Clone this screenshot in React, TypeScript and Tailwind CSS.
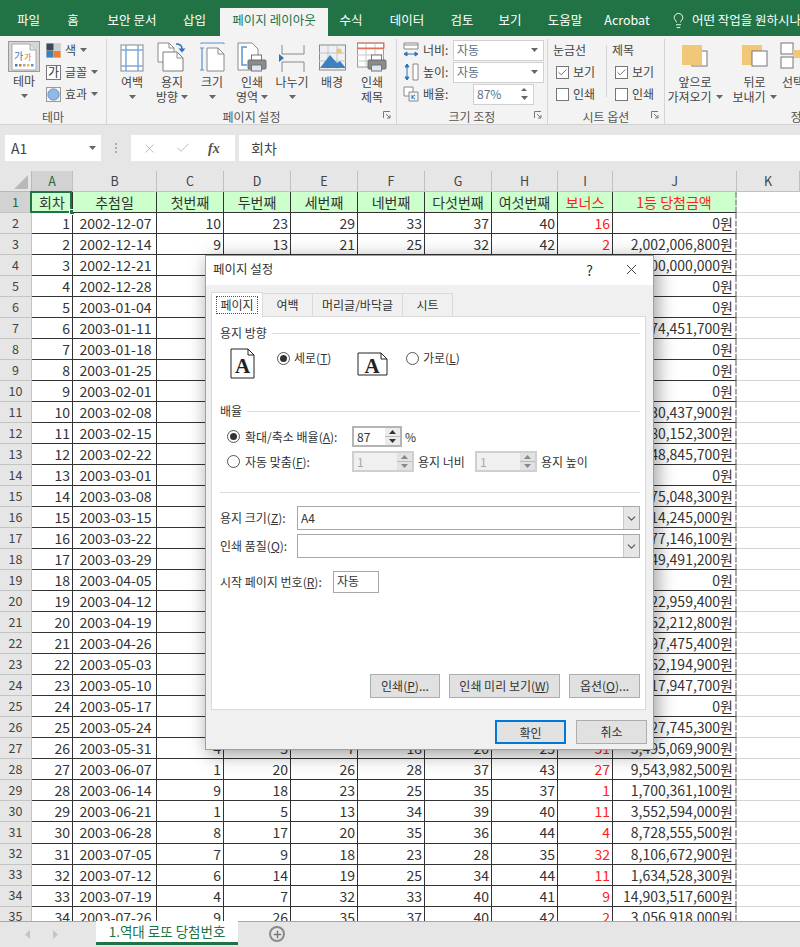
import { Check, ChevronDown, Lightbulb, Plus, X } from "lucide-react"
import type { ReactNode } from "react"

const colHeads = ["A", "B", "C", "D", "E", "F", "G", "H", "I", "J", "K"]
const titles = ["회차", "추첨일", "첫번째", "두번째", "세번째", "네번째", "다섯번째", "여섯번째", "보너스", "1등 당첨금액"]

// only the numbers that are not behind the dialog
const balls: Record<number, number[]> = {
  1: [10, 23, 29, 33, 37, 40, 16],
  2: [9, 13, 21, 25, 32, 42, 2],
  26: [4, 5, 7, 18, 20, 25, 31],
  27: [1, 20, 26, 28, 37, 43, 27],
  28: [9, 18, 23, 25, 35, 37, 1],
  29: [1, 5, 13, 34, 39, 40, 11],
  30: [8, 17, 20, 35, 36, 44, 4],
  31: [7, 9, 18, 23, 28, 35, 32],
  32: [6, 14, 19, 25, 34, 44, 11],
  33: [4, 7, 32, 33, 40, 41, 9],
  34: [9, 26, 35, 37, 40, 42, 2],
}

const prizes = [
  "0", "2,002,006,800", "2,000,000,000", "0", "0", "74,451,700", "0", "0", "0", "30,437,900", "80,152,300",
  "48,845,700", "0", "75,048,300", "14,245,000", "77,146,100", "49,491,200", "0", "22,959,400", "52,212,800",
  "97,475,400", "52,194,900", "17,947,700", "0", "27,745,300", "3,495,069,900", "9,543,982,500", "1,700,361,100",
  "3,552,594,000", "8,728,555,500", "8,106,672,900", "1,634,528,300", "14,903,517,600", "3,056,918,000",
]

function drawDate(round: number) {
  const d = new Date(Date.UTC(2002, 11, 7 + (round - 1) * 7))
  return d.toISOString().slice(0, 10)
}

function Caret() {
  return (
    <svg width="7" height="4" viewBox="0 0 7 4" className="inline-block shrink-0">
      <path d="M0 0h7L3.5 4z" fill="#666" />
    </svg>
  )
}

function Printer({ x, y }: { x: number; y: number }) {
  return (
    <g transform={`translate(${x} ${y})`}>
      <rect x="4" y="0.5" width="10" height="6" fill="#fff" stroke="#777" />
      <rect x="0.5" y="5.5" width="18" height="9" rx="1" fill="#8b8b8b" stroke="#6f6f6f" />
      <rect x="4" y="10.5" width="10" height="6" fill="#dfe7f2" stroke="#777" />
    </g>
  )
}

function MarginsIcon() {
  return (
    <svg width="24" height="28" viewBox="0 0 24 28">
      <rect x="1" y="1" width="22" height="26" fill="#fff" stroke="#8a8a8a" />
      <path d="M6 1v26M18 1v26M1 6h22M1 22h22" stroke="#7da9dc" strokeWidth="1.5" />
    </svg>
  )
}

function OrientationIcon() {
  return (
    <svg width="30" height="30" viewBox="0 0 30 30">
      <path d="M1 1h11l5 5v14H1z" fill="#fff" stroke="#8a8a8a" />
      <path d="M6 10h14l6 6v13H6z" fill="#fff" stroke="#7a7a7a" />
      <path d="M20 10v6h6M12 1v5h5" fill="none" stroke="#8a8a8a" />
      <path d="M19 2c4 0 6 2 6 5" fill="none" stroke="#2f74b8" strokeWidth="1.6" />
      <path d="M21.5 6.5h7L25 10.5z" fill="#2f74b8" />
    </svg>
  )
}

function SizeIcon() {
  return (
    <svg width="25" height="30" viewBox="0 0 25 30">
      <path d="M7 6h11l6 6v17H7z" fill="#fff" stroke="#8a8a8a" />
      <path d="M18 6v6h6" fill="none" stroke="#8a8a8a" />
      <path d="M1 1h23M1 1v1M24 1v1M2 6v22M0 6h4M0 28h4" stroke="#5b93d2" strokeWidth="1.2" fill="none" />
    </svg>
  )
}

function PrintAreaIcon() {
  return (
    <svg width="30" height="30" viewBox="0 0 30 30">
      <path d="M1 1h14l6 6v21H1z" fill="#fff" stroke="#8a8a8a" />
      <path d="M10 5H5v18h5" fill="none" stroke="#5b93d2" strokeWidth="1.5" />
      <Printer x={10.5} y={12.5} />
    </svg>
  )
}

function BreaksIcon() {
  return (
    <svg width="26" height="28" viewBox="0 0 26 28">
      <path d="M3 1v9h22V1M3 28V18h22v10" fill="none" stroke="#8a8a8a" />
      <path d="M0 10l5 4-5 4z" fill="#2f74b8" />
    </svg>
  )
}

function BackgroundIcon() {
  return (
    <svg width="27" height="28" viewBox="0 0 27 28">
      <rect x="0.5" y="1" width="26" height="25" fill="#eef1f3" stroke="#8a8a8a" />
      <path d="M9 1v25M18 1v25M0 9h27M0 17h27" stroke="#c3c3c3" />
      <circle cx="20" cy="7" r="2.6" fill="#efc377" />
      <path d="M1 24l10-13 7 8 3-2 5 6v1H1z" fill="#3f7fbe" />
    </svg>
  )
}

function PrintTitlesIcon() {
  return (
    <svg width="30" height="30" viewBox="0 0 30 30">
      <rect x="0.5" y="1" width="26" height="24" fill="#fff" stroke="#9a9a9a" />
      <path d="M0 7h27M0 13h27M0 19h27M9 1v24M18 1v24" stroke="#c8c8c8" />
      <rect x="0" y="1" width="27" height="5" fill="none" stroke="#e0705a" />
      <path d="M0 6.5h27" stroke="#e0705a" />
      <Printer x={10.5} y={12.5} />
    </svg>
  )
}

function ThemeIcon() {
  return (
    <svg width="26" height="28" viewBox="0 0 26 28">
      <path d="M1 1h18l6 6v20H1z" fill="#fff" stroke="#aaa" />
      <path d="M19 1v6h6" fill="#e5e5e5" stroke="#aaa" />
      <text x="3" y="17" fontSize="10" fill="#2f74b8">가</text>
      <text x="13" y="17" fontSize="8" fill="#d8772a">가</text>
      <g>
        <rect x="4" y="21" width="2.5" height="2.5" fill="#3f7fbe" />
        <rect x="8" y="21" width="2.5" height="2.5" fill="#d8772a" />
        <rect x="12" y="21" width="2.5" height="2.5" fill="#a5a5a5" />
        <rect x="16" y="21" width="2.5" height="2.5" fill="#efc04a" />
        <rect x="20" y="21" width="2.5" height="2.5" fill="#5b93d2" />
      </g>
    </svg>
  )
}

function ColorsIcon() {
  return (
    <svg width="15" height="15" viewBox="0 0 15 15">
      <rect width="15" height="15" fill="#d9d9d9" />
      <rect x="0.5" y="0.5" width="7" height="7" fill="#3b4a5a" />
      <rect x="8" y="0.5" width="6.5" height="7" fill="#cfcfcf" />
      <rect x="0.5" y="8" width="7" height="6.5" fill="#3f7fbe" />
      <rect x="8" y="8" width="6.5" height="6.5" fill="#ed7d31" />
    </svg>
  )
}

function FontsIcon() {
  return (
    <span className="flex h-[15px] w-[15px] items-center justify-center border border-[#777] bg-white text-[12px] leading-none text-[#333]">
      가
    </span>
  )
}

function EffectsIcon() {
  return (
    <svg width="15" height="15" viewBox="0 0 15 15">
      <rect x="0.5" y="0.5" width="14" height="14" fill="#f5f5f5" stroke="#999" />
      <circle cx="7.5" cy="7.5" r="5.6" fill="#92b8e4" stroke="#5b93d2" />
    </svg>
  )
}

function Launcher() {
  return (
    <svg width="8" height="8" viewBox="0 0 8 8" className="absolute bottom-[5px] right-[5px]">
      <path d="M0.5 7V0.5H7M3 3l4 4M7 4v3H4" fill="none" stroke="#777" />
    </svg>
  )
}

function Group({ label, width, children, launcher }: { label: string; width: string; children: ReactNode; launcher?: boolean }) {
  return (
    <div className={`relative flex h-[85px] shrink-0 flex-col border-r border-[#d5d5d5] ${width}`}>
      <div className="flex h-[72px] flex-1">{children}</div>
      <div className="pb-[1px] text-center text-[12px] leading-[13px] text-[#555]">{label}</div>
      {launcher && <Launcher />}
    </div>
  )
}

function BigButton({ icon, lines, caret }: { icon: ReactNode; lines: string[]; caret?: boolean }) {
  return (
    <div className="flex w-[40px] shrink-0 flex-col items-center text-[12px] leading-[15px] text-[#444]">
      <div className="flex h-[32px] items-end justify-center">{icon}</div>
      <div className="mt-[2px] whitespace-nowrap">{lines[0]}</div>
      {lines[1] ? (
        <div className="flex items-center gap-[3px] whitespace-nowrap">
          {lines[1]}
          {caret && <Caret />}
        </div>
      ) : (
        caret && (
          <div className="flex h-[15px] items-center">
            <Caret />
          </div>
        )
      )}
    </div>
  )
}

function SmallTheme({ icon, label }: { icon: ReactNode; label: string }) {
  return (
    <div className="flex h-[22px] items-center gap-[4px] text-[12px] text-[#444]">
      {icon}
      {label}
      <Caret />
    </div>
  )
}

function CheckBox({ checked, label }: { checked?: boolean; label: string }) {
  return (
    <div className="flex h-[22px] items-center gap-[4px] text-[12px] text-[#444]">
      <span className="flex h-[13px] w-[13px] items-center justify-center border border-[#777] bg-white">
        {checked && <Check size={11} strokeWidth={1.6} color="#444" />}
      </span>
      {label}
    </div>
  )
}

function ScaleCombo({ label, icon }: { label: string; icon: ReactNode }) {
  return (
    <div className="flex h-[22px] items-center text-[12px] text-[#444]">
      <span className="w-[16px]">{icon}</span>
      <span className="ml-[4px] w-[30px]">{label}</span>
      <span className="flex h-[21px] w-[91px] items-center justify-between border border-[#d0d0d0] bg-white pl-[3px] pr-[5px] text-[#5a6f8a]">
        자동
        <Caret />
      </span>
    </div>
  )
}

function Ribbon() {
  return (
    <div className="flex h-[89px] overflow-hidden border-b border-[#d2d2d2] bg-[#f3f3f3] pt-[3px]">
      <Group label="테마" width="w-[107px]">
        <div className="ml-[8px] flex w-[32px] flex-col items-center text-[12px] leading-[15px] text-[#444]">
          <div className="mt-[2px] flex h-[31px] w-[32px] items-center justify-center border border-[#9a9a9a] bg-[#d6d6d6]">
            <ThemeIcon />
          </div>
          <div className="mt-[1px]">테마</div>
          <div className="flex h-[15px] items-center">
            <Caret />
          </div>
        </div>
        <div className="ml-[6px] flex flex-col">
          <SmallTheme icon={<ColorsIcon />} label="색" />
          <SmallTheme icon={<FontsIcon />} label="글꼴" />
          <SmallTheme icon={<EffectsIcon />} label="효과" />
        </div>
      </Group>
      <Group label="페이지 설정" width="w-[290px]" launcher>
        <div className="ml-[5px] mt-[1px] flex">
          <BigButton icon={<MarginsIcon />} lines={["여백"]} caret />
          <BigButton icon={<OrientationIcon />} lines={["용지", "방향"]} caret />
          <BigButton icon={<SizeIcon />} lines={["크기"]} caret />
          <BigButton icon={<PrintAreaIcon />} lines={["인쇄", "영역"]} caret />
          <BigButton icon={<BreaksIcon />} lines={["나누기"]} caret />
          <BigButton icon={<BackgroundIcon />} lines={["배경"]} />
          <BigButton icon={<PrintTitlesIcon />} lines={["인쇄", "제목"]} />
        </div>
      </Group>
      <Group label="크기 조정" width="w-[151px]" launcher>
        <div className="ml-[6px] flex flex-col">
          <ScaleCombo
            label="너비:"
            icon={
              <svg width="16" height="16" viewBox="0 0 16 16">
                <path d="M1 1h14v6H1zM1 3h14" fill="#fff" stroke="#888" />
                <path d="M1 12h14M1 12l3-2v4zM15 12l-3-2v4z" stroke="#2f74b8" fill="#2f74b8" />
              </svg>
            }
          />
          <ScaleCombo
            label="높이:"
            icon={
              <svg width="16" height="18" viewBox="0 0 16 18">
                <path d="M10 1h5v16h-5z" fill="#fff" stroke="#888" />
                <path d="M4 1v16M4 1L2 4h4zM4 17l-2-3h4z" stroke="#2f74b8" fill="#2f74b8" />
              </svg>
            }
          />
          <div className="flex h-[22px] items-center text-[12px] text-[#444]">
            <svg width="16" height="16" viewBox="0 0 16 16">
              <path d="M1 1h9v9H1z" fill="#fff" stroke="#888" />
              <path d="M6 6h9v9H6z" fill="#eef3fa" stroke="#888" />
              <path d="M9 9v4M9 11l3-2M9 11l3 2" stroke="#2f74b8" fill="none" />
            </svg>
            <span className="ml-[4px] w-[50px]">배율:</span>
            <span className="flex h-[21px] w-[61px] items-center justify-between border border-[#d0d0d0] bg-white pl-[3px] pr-[5px] text-[#5a6f8a]">
              87%
              <span className="flex flex-col gap-[5px]">
                <svg width="6" height="3" viewBox="0 0 6 3"><path d="M0 3h6L3 0z" fill="#666" /></svg>
                <Caret />
              </span>
            </span>
          </div>
        </div>
      </Group>
      <Group label="시트 옵션" width="w-[117px]" launcher>
        <div className="ml-[5px] w-[53px] text-[12px] text-[#444]">
          <div className="flex h-[22px] items-center">눈금선</div>
          <div className="ml-[3px]">
            <CheckBox checked label="보기" />
            <CheckBox label="인쇄" />
          </div>
        </div>
        <div className="mt-[6px] h-[52px] border-l border-[#d5d5d5]" />
        <div className="ml-[5px] text-[12px] text-[#444]">
          <div className="flex h-[22px] items-center">제목</div>
          <div className="ml-[3px]">
            <CheckBox checked label="보기" />
            <CheckBox label="인쇄" />
          </div>
        </div>
      </Group>
      <Group label="정렬" width="w-[274px]">
        <div className="mt-[1px] flex">
          <div className="flex w-[60px] flex-col items-center text-[12px] leading-[15px] text-[#444]">
            <svg width="26" height="30" viewBox="0 0 26 30">
              <rect x="10" y="11" width="15" height="15" fill="#fff" stroke="#777" />
              <rect x="0" y="5" width="20" height="20" fill="#f0c877" />
            </svg>
            <div className="mt-[4px] whitespace-nowrap">앞으로</div>
            <div className="flex items-center gap-[4px] whitespace-nowrap">가져오기<Caret /></div>
          </div>
          <div className="flex w-[59px] flex-col items-center text-[12px] leading-[15px] text-[#444]">
            <svg width="26" height="30" viewBox="0 0 26 30">
              <rect x="0" y="5" width="20" height="20" fill="#f0c877" />
              <rect x="10" y="11" width="15" height="15" fill="#fff" stroke="#777" />
            </svg>
            <div className="mt-[4px] whitespace-nowrap">뒤로</div>
            <div className="flex items-center gap-[4px] whitespace-nowrap">보내기<Caret /></div>
          </div>
          <div className="ml-[-11px] flex w-[40px] flex-col items-center text-[12px] leading-[15px] text-[#444]">
            <svg width="26" height="30" viewBox="0 0 26 30">
              <rect x="1" y="3" width="12" height="11" fill="#fff" stroke="#777" />
              <rect x="13" y="10" width="13" height="8" fill="#f0c877" />
              <rect x="1" y="17" width="12" height="11" fill="#fff" stroke="#777" />
            </svg>
            <div className="mt-[4px] whitespace-nowrap">선택</div>
          </div>
        </div>
      </Group>
    </div>
  )
}

const menuTabs = [
  { label: "파일", w: "ml-[6px] w-[45px]" },
  { label: "홈", w: "w-[44px]" },
  { label: "보안 문서", w: "w-[74px]" },
  { label: "삽입", w: "w-[51px]" },
  { label: "페이지 레이아웃", w: "w-[108px]", active: true },
  { label: "수식", w: "w-[46px]" },
  { label: "데이터", w: "w-[66px]" },
  { label: "검토", w: "w-[44px]" },
  { label: "보기", w: "w-[52px]" },
  { label: "도움말", w: "w-[58px]" },
  { label: "Acrobat", w: "w-[66px]" },
]

function MenuBar() {
  return (
    <div className="flex h-[36px] items-end overflow-hidden bg-[#217346] text-[12.5px] text-white">
      {menuTabs.map((t) => (
        <div
          key={t.label}
          className={`flex h-[28px] shrink-0 items-center justify-center pb-[3px] ${t.w} ${
            t.active ? "bg-[#f3f3f3] text-[#217346]" : ""
          }`}
        >
          {t.label}
        </div>
      ))}
      <div className="ml-[10px] flex h-[28px] shrink-0 items-center gap-[5px] whitespace-nowrap pb-[3px]">
        <Lightbulb size={17} strokeWidth={1.3} />
        어떤 작업을 원하시나요?
      </div>
    </div>
  )
}

function FormulaBar() {
  return (
    <div className="flex h-[46px] bg-[#e6e6e6] pt-[10px] text-[14px] text-[#444]">
      <div className="ml-[5px] flex h-[26px] w-[96px] items-center justify-between bg-white pl-[6px] pr-[5px]">
        A1
        <Caret />
      </div>
      <div className="flex h-[26px] w-[30px] flex-col items-center justify-center gap-[2px]">
        <span className="h-[2px] w-[2px] bg-[#aaa]" />
        <span className="h-[2px] w-[2px] bg-[#aaa]" />
        <span className="h-[2px] w-[2px] bg-[#aaa]" />
      </div>
      <div className="flex h-[26px] w-[104px] items-center bg-white pl-[11px]">
        <X size={15} color="#bbb" strokeWidth={1.5} />
        <Check size={16} color="#bbb" strokeWidth={1.5} className="ml-[18px]" />
        <span className="ml-[17px] [font-family:'Liberation_Serif',serif] text-[14px] font-bold italic text-[#555]">fx</span>
      </div>
      <div className="ml-[4px] flex h-[26px] flex-1 items-center bg-white pl-[12px]">회차</div>
    </div>
  )
}

function ColumnHeaders() {
  return (
    <>
      <div className="flex h-[21px] items-end justify-end border-b border-r border-[#b8b8b8] bg-[#e6e6e6] p-[2px] pr-[3px]">
        <svg width="14" height="14" viewBox="0 0 14 14">
          <path d="M14 0v14H0z" fill="#b9b9b9" />
        </svg>
      </div>
      {colHeads.map((c, i) => (
        <div
          key={c}
          className={`flex h-[21px] items-center justify-center border-b border-r border-[#c0c0c0] text-[12.5px] ${
            i === 0 ? "bg-[#d2d2d2] text-[#1f6b41]" : "bg-[#e6e6e6] text-[#444]"
          }`}
        >
          {c}
        </div>
      ))}
    </>
  )
}

function RowHead({ n }: { n: number }) {
  return (
    <div
      className={`flex items-center justify-center border-b border-r border-[#c4c4c4] text-[12.5px] ${
        n === 1 ? "bg-[#d2d2d2] text-[#1f6b41]" : "bg-[#e6e6e6] text-[#444]"
      }`}
    >
      {n}
    </div>
  )
}

function Sheet() {
  const rounds = Array.from({ length: 34 }, (_, i) => i + 1)
  return (
    <div className="flex-1 overflow-hidden">
      <div className="grid auto-rows-[21.03px] grid-cols-[32px_41px_84px_67px_67px_67px_67px_67px_66px_55px_124px_63px] text-[14px] leading-none text-[#333]">
        <ColumnHeaders />
        <RowHead n={1} />
        {titles.map((t, i) => (
          <div
            key={t}
            className={`relative flex items-center justify-center whitespace-nowrap border-b border-[#333] bg-[#ccffcc] ${
              i === 9 ? "border-r-2 border-r-[#a8a8a8] [border-right-style:dashed]" : "border-r"
            } ${i >= 8 ? "text-[#ff2020]" : ""}`}
          >
            {t}
            {i === 0 && (
              <>
                <span className="absolute left-[-2px] top-[-1px] h-[22px] w-[42px] border-2 border-[#217346]" />
                <span className="absolute bottom-[-3px] right-[-3px] h-[6px] w-[6px] border border-white bg-[#217346]" />
              </>
            )}
          </div>
        ))}
        <div className="border-b border-[#d4d4d4] bg-white" />
        {rounds.map((r) => (
          <Row key={r} round={r} />
        ))}
      </div>
    </div>
  )
}

function Row({ round }: { round: number }) {
  const nums = balls[round] ?? []
  const cell = "flex items-center justify-end whitespace-nowrap border-b border-r border-[#333] bg-white pr-[2px]"
  return (
    <>
      <RowHead n={round + 1} />
      <div className={cell}>{round}</div>
      <div className="flex items-center justify-center whitespace-nowrap border-b border-r border-[#333] bg-white pl-[2px]">
        {drawDate(round)}
      </div>
      {Array.from({ length: 7 }, (_, i) => (
        <div key={i} className={`${cell} ${i === 6 ? "text-[#ff2020]" : ""}`}>
          {nums[i]}
        </div>
      ))}
      <div className="flex items-center justify-end whitespace-nowrap border-b border-r-2 border-b-[#333] border-r-[#a8a8a8] bg-white pr-[2px] [border-right-style:dashed]">
        {prizes[round - 1]}원
      </div>
      <div className="border-b border-[#d4d4d4] bg-white" />
    </>
  )
}

function SheetTabs() {
  return (
    <div className="flex h-[26px] items-start border-t border-[#a8a8a8] bg-[#e6e6e6]">
      <div className="ml-[25px] flex h-[25px] w-[71px] items-center gap-[23px]">
        <svg width="5" height="9" viewBox="0 0 5 9"><path d="M5 0v9L0 4.5z" fill="#c4c4c4" /></svg>
        <svg width="5" height="9" viewBox="0 0 5 9"><path d="M0 0v9l5-4.5z" fill="#c4c4c4" /></svg>
      </div>
      <div className="mt-[-1px] flex h-[24px] w-[142px] items-center justify-center border-b-[3px] border-[#217346] bg-white text-[13.5px] text-[#217346]">
        1.역대 로또 당첨번호
      </div>
      <div className="ml-[31px] mt-[4px] flex h-[16px] w-[16px] items-center justify-center rounded-full border-2 border-[#8a8a8a]">
        <Plus size={11} color="#777" strokeWidth={3} />
      </div>
    </div>
  )
}

function Radio({ checked }: { checked?: boolean }) {
  return (
    <span className="flex h-[13px] w-[13px] shrink-0 items-center justify-center rounded-full border border-[#555] bg-white">
      {checked && <span className="h-[7px] w-[7px] rounded-full bg-[#333]" />}
    </span>
  )
}

function SectionHead({ label }: { label: string }) {
  return (
    <div className="flex h-[16px] items-center gap-[5px]">
      <span>{label}</span>
      <span className="h-px flex-1 bg-[#dcdcdc]" />
    </div>
  )
}

function Arrows({ disabled }: { disabled?: boolean }) {
  const color = disabled ? "#888" : "#333"
  return (
    <span className={`flex w-[15px] flex-col self-stretch ${disabled ? "bg-[#e2e2e2]" : "bg-[#ececec]"}`}>
      <span className="flex flex-1 items-center justify-center border-b border-[#bbb]">
        <svg width="7" height="4" viewBox="0 0 7 4"><path d="M0 4h7L3.5 0z" fill={color} /></svg>
      </span>
      <span className="flex flex-1 items-center justify-center">
        <svg width="7" height="4" viewBox="0 0 7 4"><path d="M0 0h7L3.5 4z" fill={color} /></svg>
      </span>
    </span>
  )
}

function Spin({ value, disabled, width }: { value: string; disabled?: boolean; width: string }) {
  return (
    <span
      className={`flex h-[21px] items-center justify-between border-2 pl-[3px] ${width} ${
        disabled ? "border-[#cfcfcf] bg-[#f0f0f0] text-[#a8a8a8]" : "border-[#b4b4b4] bg-white text-[#333]"
      }`}
    >
      {value}
      <Arrows disabled={disabled} />
    </span>
  )
}

function SelectBox({ value }: { value?: string }) {
  return (
    <span className="flex h-[24px] w-[343px] items-center border border-[#a8a8a8] bg-white pl-[3px] text-[#333]">
      {value}
      <span className="ml-auto flex h-full w-[16px] items-center justify-center border-l border-[#c8c8c8] bg-[#e6e6e6]">
        <ChevronDown size={13} color="#555" />
      </span>
    </span>
  )
}

function DlgButton({ children, width, primary }: { children: ReactNode; width: string; primary?: boolean }) {
  return (
    <span
      className={`block bg-[#e1e1e1] text-center leading-[22px] text-[#333] ${width} ${
        primary ? "border-2 border-[#0078d7]" : "border border-[#adadad]"
      }`}
    >
      {children}
    </span>
  )
}

function PageSetupDialog() {
  const tab = "flex h-[23px] items-center justify-center border-r border-t border-[#dadada] bg-[#f0f0f0]"
  return (
    <div className="absolute left-[205px] top-[255px] flex h-[495px] w-[449px] flex-col border border-[#a0a0a0] bg-[#f0f0f0] text-[12px] leading-none text-[#333] shadow-[3px_4px_18px_rgba(0,0,0,0.4)]">
      <div className="flex h-[29px] shrink-0 items-center justify-between bg-white pb-[2px] pl-[7px] pr-[13px] text-[12.5px]">
        페이지 설정
        <span className="flex items-center gap-[30px]">
          <span className="text-[14px]">?</span>
          <X size={17} strokeWidth={1.3} />
        </span>
      </div>
      <div className="ml-[5px] mt-[7px] flex h-[24px] items-end">
        <div className="relative z-10 mb-[-1px] flex h-[25px] w-[52px] items-center justify-center border-l border-r border-t border-[#dadada] bg-white">
          <span className="border border-dotted border-[#555] px-[3px] py-[2px]">페이지</span>
        </div>
        <div className={`${tab} w-[50px]`}>여백</div>
        <div className={`${tab} w-[90px]`}>머리글/바닥글</div>
        <div className={`${tab} w-[50px]`}>시트</div>
      </div>
      <div className="ml-[5px] flex h-[394px] w-[435px] flex-col border border-[#dadada] bg-white pl-[8px] pr-[5px] pt-[8px]">
        <SectionHead label="용지 방향" />
        <div className="mt-[7px] flex h-[30px]">
          <svg width="25" height="31" viewBox="0 0 25 31" className="ml-[10px] shrink-0">
            <path d="M1 1h17l6 6v23H1z" fill="#fff" stroke="#222" />
            <path d="M18 1v6h6" fill="none" stroke="#222" />
            <text x="12.5" y="25" textAnchor="middle" fontSize="21" fontWeight="700" fontFamily="Liberation Serif, serif" fill="#222">A</text>
          </svg>
          <div className="ml-[22px] flex w-[80px] shrink-0 items-start gap-[4px] pt-[4px]">
            <Radio checked />
            <span className="whitespace-nowrap">세로(<u>T</u>)</span>
          </div>
          <svg width="31" height="24" viewBox="0 0 31 24" className="mt-[4px] shrink-0">
            <path d="M1 1h23l6 6v16H1z" fill="#fff" stroke="#222" />
            <path d="M24 1v6h6" fill="none" stroke="#222" />
            <text x="15" y="21" textAnchor="middle" fontSize="21" fontWeight="700" fontFamily="Liberation Serif, serif" fill="#222">A</text>
          </svg>
          <div className="ml-[18px] flex items-start gap-[4px] pt-[4px]">
            <Radio />
            <span className="whitespace-nowrap">가로(<u>L</u>)</span>
          </div>
        </div>
        <div className="mt-[25px]">
          <SectionHead label="배율" />
        </div>
        <div className="ml-[7px] mt-[7px] flex h-[21px] items-center">
          <Radio checked />
          <span className="ml-[5px] w-[107px] whitespace-nowrap">
            확대/축소 배율(<u>A</u>):
          </span>
          <Spin value="87" width="w-[50px]" />
          <span className="ml-[3px]">%</span>
        </div>
        <div className="ml-[7px] mt-[4px] flex h-[21px] items-center">
          <Radio />
          <span className="ml-[5px] w-[107px] whitespace-nowrap">
            자동 맞춤(<u>F</u>):
          </span>
          <Spin value="1" disabled width="w-[62px]" />
          <span className="ml-[4px] w-[57px]">용지 너비</span>
          <Spin value="1" disabled width="w-[62px]" />
          <span className="ml-[4px]">용지 높이</span>
        </div>
        <div className="mt-[20px] h-px shrink-0 bg-[#dcdcdc]" />
        <div className="mt-[13px] flex items-center">
          <span className="w-[77px] whitespace-nowrap">
            용지 크기(<u>Z</u>):
          </span>
          <SelectBox value="A4" />
        </div>
        <div className="mt-[4px] flex items-center">
          <span className="w-[77px] whitespace-nowrap">
            인쇄 품질(<u>Q</u>):
          </span>
          <SelectBox />
        </div>
        <div className="mt-[13px] flex items-center">
          <span className="w-[113px] whitespace-nowrap">
            시작 페이지 번호(<u>R</u>):
          </span>
          <span className="flex h-[22px] w-[46px] items-start border border-[#a8a8a8] bg-white pl-[3px] pt-[3px]">자동</span>
        </div>
        <div className="mb-[11px] mt-auto flex h-[24px] justify-end gap-[9px]">
          <DlgButton width="w-[70px]">인쇄(<u>P</u>)...</DlgButton>
          <DlgButton width="w-[111px]">인쇄 미리 보기(<u>W</u>)</DlgButton>
          <DlgButton width="w-[71px]">옵션(<u>O</u>)...</DlgButton>
        </div>
      </div>
      <div className="mr-[6px] mt-[10px] flex h-[24px] justify-end gap-[10px]">
        <DlgButton width="w-[71px]" primary>확인</DlgButton>
        <DlgButton width="w-[71px]">취소</DlgButton>
      </div>
    </div>
  )
}

export default function App() {
  return (
    <div className="relative flex h-[947px] w-[800px] flex-col overflow-hidden bg-white [font-family:'Noto_Sans_CJK_KR','Noto_Sans',sans-serif]">
      <MenuBar />
      <Ribbon />
      <FormulaBar />
      <Sheet />
      <SheetTabs />
      <PageSetupDialog />
    </div>
  )
}
